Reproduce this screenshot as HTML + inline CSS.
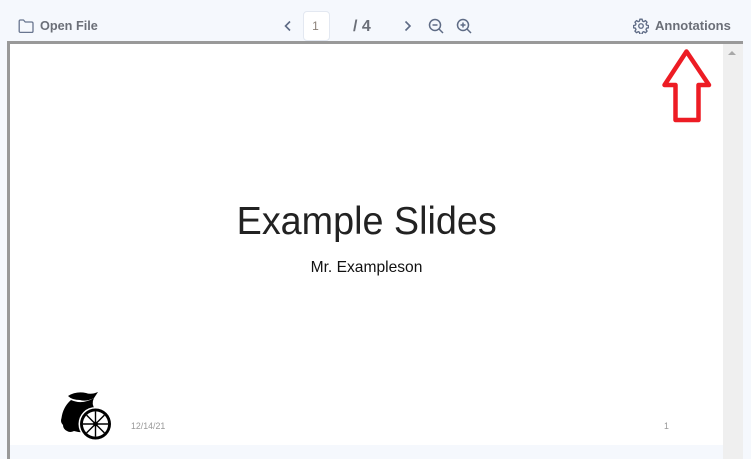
<!DOCTYPE html>
<html>
<head>
<meta charset="utf-8">
<style>
html,body{margin:0;padding:0}
body{width:751px;height:459px;overflow:hidden;background:#f5f8fd;position:relative;font-family:"Liberation Sans",sans-serif}
.abs{position:absolute}
.t{position:absolute;white-space:nowrap;font-weight:bold;color:#6b6f78}
</style>
</head>
<body>
<!-- viewer frame -->
<div class="abs" style="left:7px;top:41px;width:736px;height:3px;background:#999"></div>
<div class="abs" style="left:7px;top:41px;width:3px;height:418px;background:#999"></div>
<div class="abs" style="left:10px;top:44px;width:713px;height:401px;background:#fff"></div>
<div class="abs" style="left:10px;top:445px;width:713px;height:14px;background:#f5f8fd"></div>
<div class="abs" style="left:723px;top:44px;width:20px;height:415px;background:#efefef"></div>
<svg class="abs" style="left:726px;top:48px" width="12" height="8"><path d="M2 7L6 3L10 7Z" fill="#a8a8a8"/></svg>

<!-- toolbar -->
<svg class="abs" style="left:18px;top:18px" width="16" height="16" viewBox="0 0 16 16" fill="none" stroke="#68758f" stroke-width="1.3" stroke-linejoin="round"><path d="M1.2 3.2Q1.2 2 2.4 2H5.5L7.2 4H13.6Q15 4 15 5.4V13.2Q15 14.4 13.8 14.4H2.4Q1.2 14.4 1.2 13.2Z"/></svg>
<div class="t" style="left:40px;top:18px;font-size:12.7px;line-height:16px">Open File</div>

<svg class="abs" style="left:282px;top:19px" width="11" height="14" viewBox="0 0 11 14" fill="none" stroke="#5e6b85" stroke-width="1.6"><path d="M8 2.5L3.5 7L8 11.5"/></svg>
<div class="abs" style="left:303px;top:11px;width:25px;height:28px;background:#fff;border:1px solid #e3e8f1;border-radius:4px"></div>
<div class="abs" style="left:302px;top:18px;width:27px;text-align:center;font-size:12px;line-height:16px;color:#8a8078">1</div>
<div class="t" style="left:353px;top:18px;font-size:16px;line-height:18px">/ 4</div>
<svg class="abs" style="left:402px;top:19px" width="11" height="14" viewBox="0 0 11 14" fill="none" stroke="#5e6b85" stroke-width="1.6"><path d="M3.5 2.5L8 7L3.5 11.5"/></svg>
<svg class="abs" style="left:428px;top:18px" width="16" height="16" viewBox="0 0 16 16" fill="none" stroke="#5e6b85" stroke-width="1.5"><circle cx="7" cy="7" r="5.5"/><path d="M11 11L15 15M4.5 7H9.5"/></svg>
<svg class="abs" style="left:456px;top:18px" width="16" height="16" viewBox="0 0 16 16" fill="none" stroke="#5e6b85" stroke-width="1.5"><circle cx="7" cy="7" r="5.5"/><path d="M11 11L15 15M4.5 7H9.5M7 4.5V9.5"/></svg>

<svg class="abs" style="left:633px;top:18px" width="16" height="16" viewBox="0 0 24 24" fill="none" stroke="#5e6b85" stroke-width="2" stroke-linejoin="round"><circle cx="12" cy="12" r="3.4"/><path d="M10.3 1.8h3.4l.6 2.9 1.9.8 2.5-1.6 2.4 2.4-1.6 2.5.8 1.9 2.9.6v3.4l-2.9.6-.8 1.9 1.6 2.5-2.4 2.4-2.5-1.6-1.9.8-.6 2.9h-3.4l-.6-2.9-1.9-.8-2.5 1.6-2.4-2.4 1.6-2.5-.8-1.9-2.9-.6v-3.4l2.9-.6.8-1.9-1.6-2.5 2.4-2.4 2.5 1.6 1.9-.8z"/></svg>
<div class="t" style="left:655px;top:18px;font-size:13px;line-height:16px">Annotations</div>

<!-- red arrow -->
<svg class="abs" style="left:660px;top:48px" width="54" height="76" viewBox="0 0 54 76" fill="none" stroke="#ed1c24" stroke-width="4.5" stroke-linejoin="round"><path d="M26.5 3.5L4.5 37H15.5V72H38.5V37H49Z"/></svg>

<!-- slide content -->
<div class="abs" style="left:10px;top:199px;width:713px;text-align:center;font-size:38.5px;line-height:46px;color:#222"><span style="display:inline-block;transform:scaleX(.98)">Example Slides</span></div>
<div class="abs" style="left:10px;top:259px;width:713px;text-align:center;font-size:15.6px;line-height:18px;color:#111">Mr. Exampleson</div>
<div class="abs" style="left:131px;top:421px;font-size:8.8px;line-height:10px;color:#999">12/14/21</div>
<div class="abs" style="left:664px;top:421px;font-size:8.8px;line-height:10px;color:#999">1</div>

<!-- lemon logo -->
<svg class="abs" style="left:58px;top:390px" width="56" height="52" viewBox="0 0 56 52">
<path d="M10 6Q18 1 28 3Q33 5 40 2L36 8Q28 12 22 10Q14 10 10 6Z" fill="#000"/>
<path d="M13 10Q24 15 36 8Q33 14 37 19V34L30 42Q22 43 16 41Q12 43 9 41Q5 39 5 35Q2 32 3.5 28Q5 17 13 10Z" fill="#000"/>
<circle cx="37.5" cy="34" r="17" fill="#fff"/>
<circle cx="37.5" cy="34" r="15.5" fill="#000"/>
<circle cx="37.5" cy="34" r="12.6" fill="#fff"/>
<path d="M37.5 21.4V46.6M24.9 34H50.1M28.6 25.1L46.4 42.9M46.4 25.1L28.6 42.9" stroke="#000" stroke-width="1.4"/>
<circle cx="37.5" cy="34" r="2.4" fill="#000"/>
</svg>
</body>
</html>
